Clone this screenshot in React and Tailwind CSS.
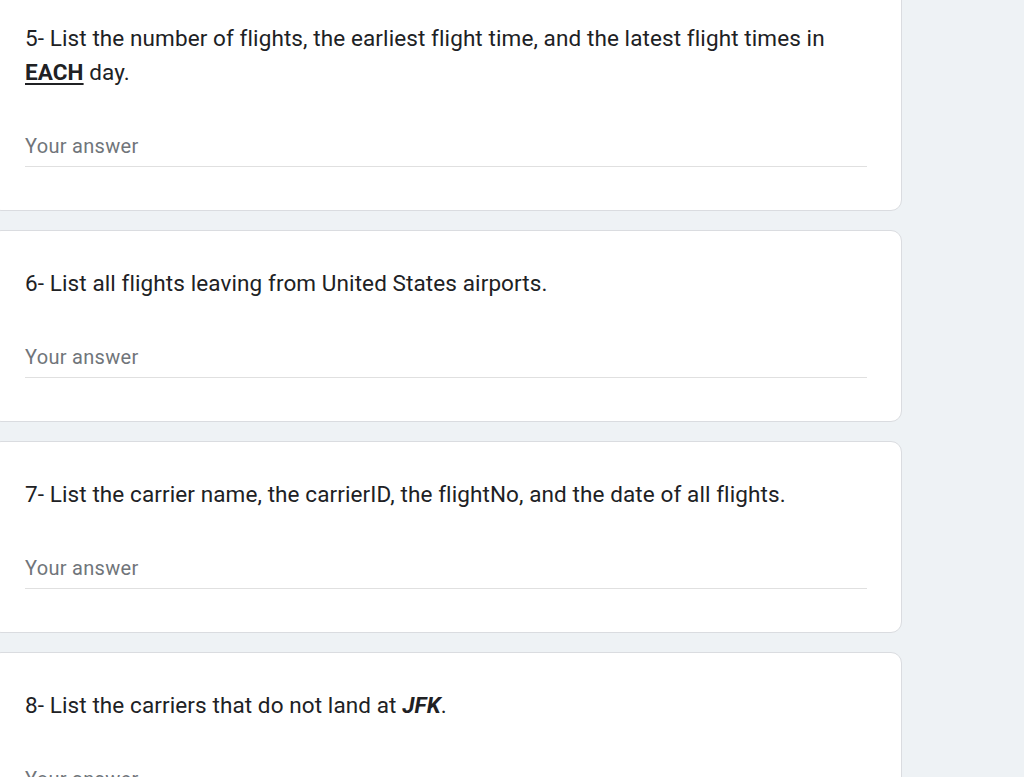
import React from "react";

const questions = [
  {
    id: 5,
    title: (
      <>
        5- List the number of flights, the earliest flight time, and the latest flight times in
        <br />
        <span className="font-bold underline underline-offset-[3px]">EACH</span> day.
      </>
    ),
  },
  { id: 6, title: <>6- List all flights leaving from United States airports.</> },
  { id: 7, title: <>7- List the carrier name, the carrierID, the flightNo, and the date of all flights.</> },
  {
    id: 8,
    title: (
      <>
        8- List the carriers that do not land at <span className="font-bold italic">JFK</span>.
      </>
    ),
  },
];

function QuestionCard({ title }) {
  return (
    <div className="w-[912px] ml-[-10px] bg-white border border-[#dadce0] rounded-[11px] px-[34px] pt-[35px] pb-[43px]">
      <div className="text-[22.5px] leading-[34px] text-[#202124] tracking-[0.1px]">{title}</div>
      <div className="mt-[45px] pb-[8px] border-b border-[#e0e0e0] text-[20px] leading-[24px] tracking-[0.3px] text-[#70757a]">
        Your answer
      </div>
    </div>
  );
}

export default function App() {
  return (
    <div
      className="min-h-[777px] h-[777px] overflow-hidden bg-[#eef2f5]"
      style={{ fontFamily: "Roboto, 'Liberation Sans', sans-serif" }}
    >
      <div className="flex flex-col gap-[19px] mt-[-15px]">
        {questions.map((q) => (
          <QuestionCard key={q.id} title={q.title} />
        ))}
      </div>
    </div>
  );
}
